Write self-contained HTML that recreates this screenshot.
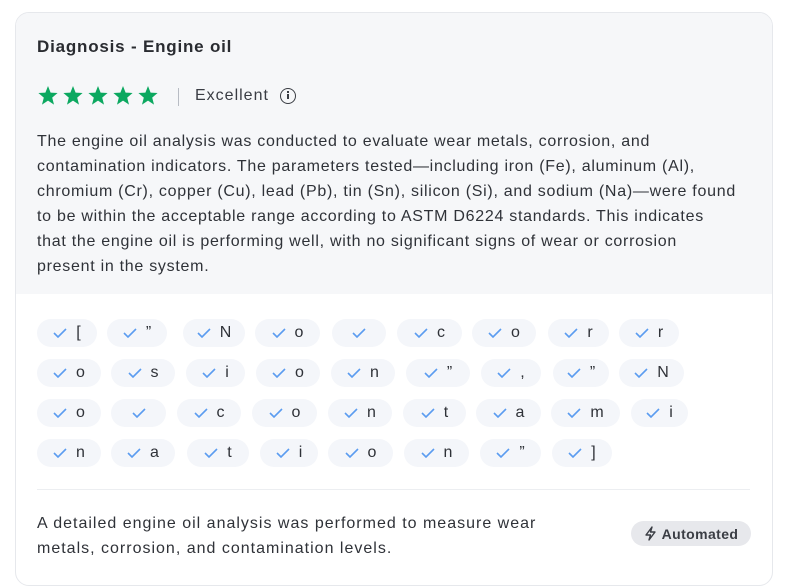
<!DOCTYPE html>
<html><head><style>
body{margin:0;width:792px;height:588px;background:#fff;font-family:"Liberation Sans",sans-serif;position:relative;overflow:hidden;color:#25272c}
.card{position:absolute;left:15px;top:12px;width:756px;height:572px;border:1px solid #e6e8ec;border-radius:14px;overflow:hidden;background:#fff}
.top{position:absolute;left:0;top:0;width:756px;height:281px;background:#f6f7f9}
.title{position:absolute;left:21px;top:24px;font-size:17px;font-weight:bold;color:#2a2c31;letter-spacing:0.8px}
.stars{position:absolute;left:22px;top:72px}
.sep{position:absolute;left:162px;top:75px;width:1px;height:18px;background:#b8bcc4}
.exc{position:absolute;left:179px;top:74px;font-size:16px;color:#3a3d44;letter-spacing:1px}
.info{position:absolute;left:264px;top:75px;width:14px;height:14px;border:1.6px solid #3a3d44;border-radius:50%}
.desc{position:absolute;left:21px;top:116px;width:740px;font-size:16px;line-height:25px;color:#2f3238;letter-spacing:0.72px;white-space:nowrap}
.chip{position:absolute;height:28px;border-radius:14px;background:#f4f6fa;font-size:16px;color:#2f3238;display:flex;align-items:center;justify-content:center;gap:9px}
.chip svg{width:14px;height:10px}
.div{position:absolute;left:21px;top:476px;width:713px;height:1px;background:#eceef1}
.foot{position:absolute;left:21px;top:498px;font-size:16px;line-height:25px;color:#2f3238;letter-spacing:1px;white-space:nowrap}
.badge{position:absolute;left:615px;top:508px;width:120px;height:25px;border-radius:13px;background:#e7e8ec;font-size:14px;font-weight:bold;color:#3a3d44;display:flex;align-items:center;justify-content:center;gap:5px;letter-spacing:0.4px}
</style></head><body>
<div class="card">
<div class="top"></div>
<div class="title">Diagnosis - Engine oil</div>
<div class="stars"><svg width="122" height="22" viewBox="0 0 122 22">
<g fill="#0ca860">
<polygon id="s" points="10,1 12.6,7.6 19.6,8 14.2,12.6 16,19.6 10,15.6 4,19.6 5.8,12.6 0.4,8 7.4,7.6"/>
<use href="#s" x="25"/><use href="#s" x="50"/><use href="#s" x="75"/><use href="#s" x="100"/></g></svg></div>
<div class="sep"></div>
<div class="exc">Excellent</div>
<div class="info"><div style="position:absolute;left:6px;top:5px;width:1.6px;height:5px;background:#3a3d44"></div><div style="position:absolute;left:6px;top:2px;width:1.6px;height:1.6px;background:#3a3d44"></div></div>
<div class="desc">The engine oil analysis was conducted to evaluate wear metals, corrosion, and<br>contamination indicators. The parameters tested—including iron (Fe), aluminum (Al),<br>chromium (Cr), copper (Cu), lead (Pb), tin (Sn), silicon (Si), and sodium (Na)—were found<br>to be within the acceptable range according to ASTM D6224 standards. This indicates<br>that the engine oil is performing well, with no significant signs of wear or corrosion<br>present in the system.</div>
<div id="chips"></div>
<div class="div"></div>
<div class="foot">A detailed engine oil analysis was performed to measure wear<br>metals, corrosion, and contamination levels.</div>
<div class="badge"><svg width="13" height="15" viewBox="0 0 13 15"><path d="M8 1 L2 9 H6.5 L5 14 L11 6 H6.5 Z" fill="none" stroke="#3a3d44" stroke-width="1.4" stroke-linejoin="round"/></svg>Automated</div>
</div>
<script>
var rows=[
[[37,97,'['],[107,167,'”'],[183,245,'N'],[255,320,'o'],[332,386,''],[397,462,'c'],[472,536,'o'],[548,609,'r'],[619,679,'r']],
[[37,101,'o'],[111,175,'s'],[186,245,'i'],[256,320,'o'],[331,395,'n'],[406,470,'”'],[481,541,','],[553,609,'”'],[619,684,'N']],
[[37,101,'o'],[111,166,''],[177,241,'c'],[252,317,'o'],[328,392,'n'],[403,466,'t'],[476,541,'a'],[551,620,'m'],[631,688,'i']],
[[37,101,'n'],[111,175,'a'],[187,249,'t'],[260,318,'i'],[328,393,'o'],[404,469,'n'],[480,541,'”'],[552,612,']']]];
var h='';rows.forEach(function(r,i){r.forEach(function(c){
h+='<div class="chip" style="left:'+(c[0]-16)+'px;top:'+(306+i*40)+'px;width:'+(c[1]-c[0])+'px"><svg viewBox="0 0 14 10"><path d="M1 5 L5 9 L13 1" fill="none" stroke="#5b9cf0" stroke-width="1.6"/></svg>'+(c[2]?'<span>'+c[2]+'</span>':'')+'</div>';});});
document.getElementById('chips').innerHTML=h;
</script>
</body></html>
